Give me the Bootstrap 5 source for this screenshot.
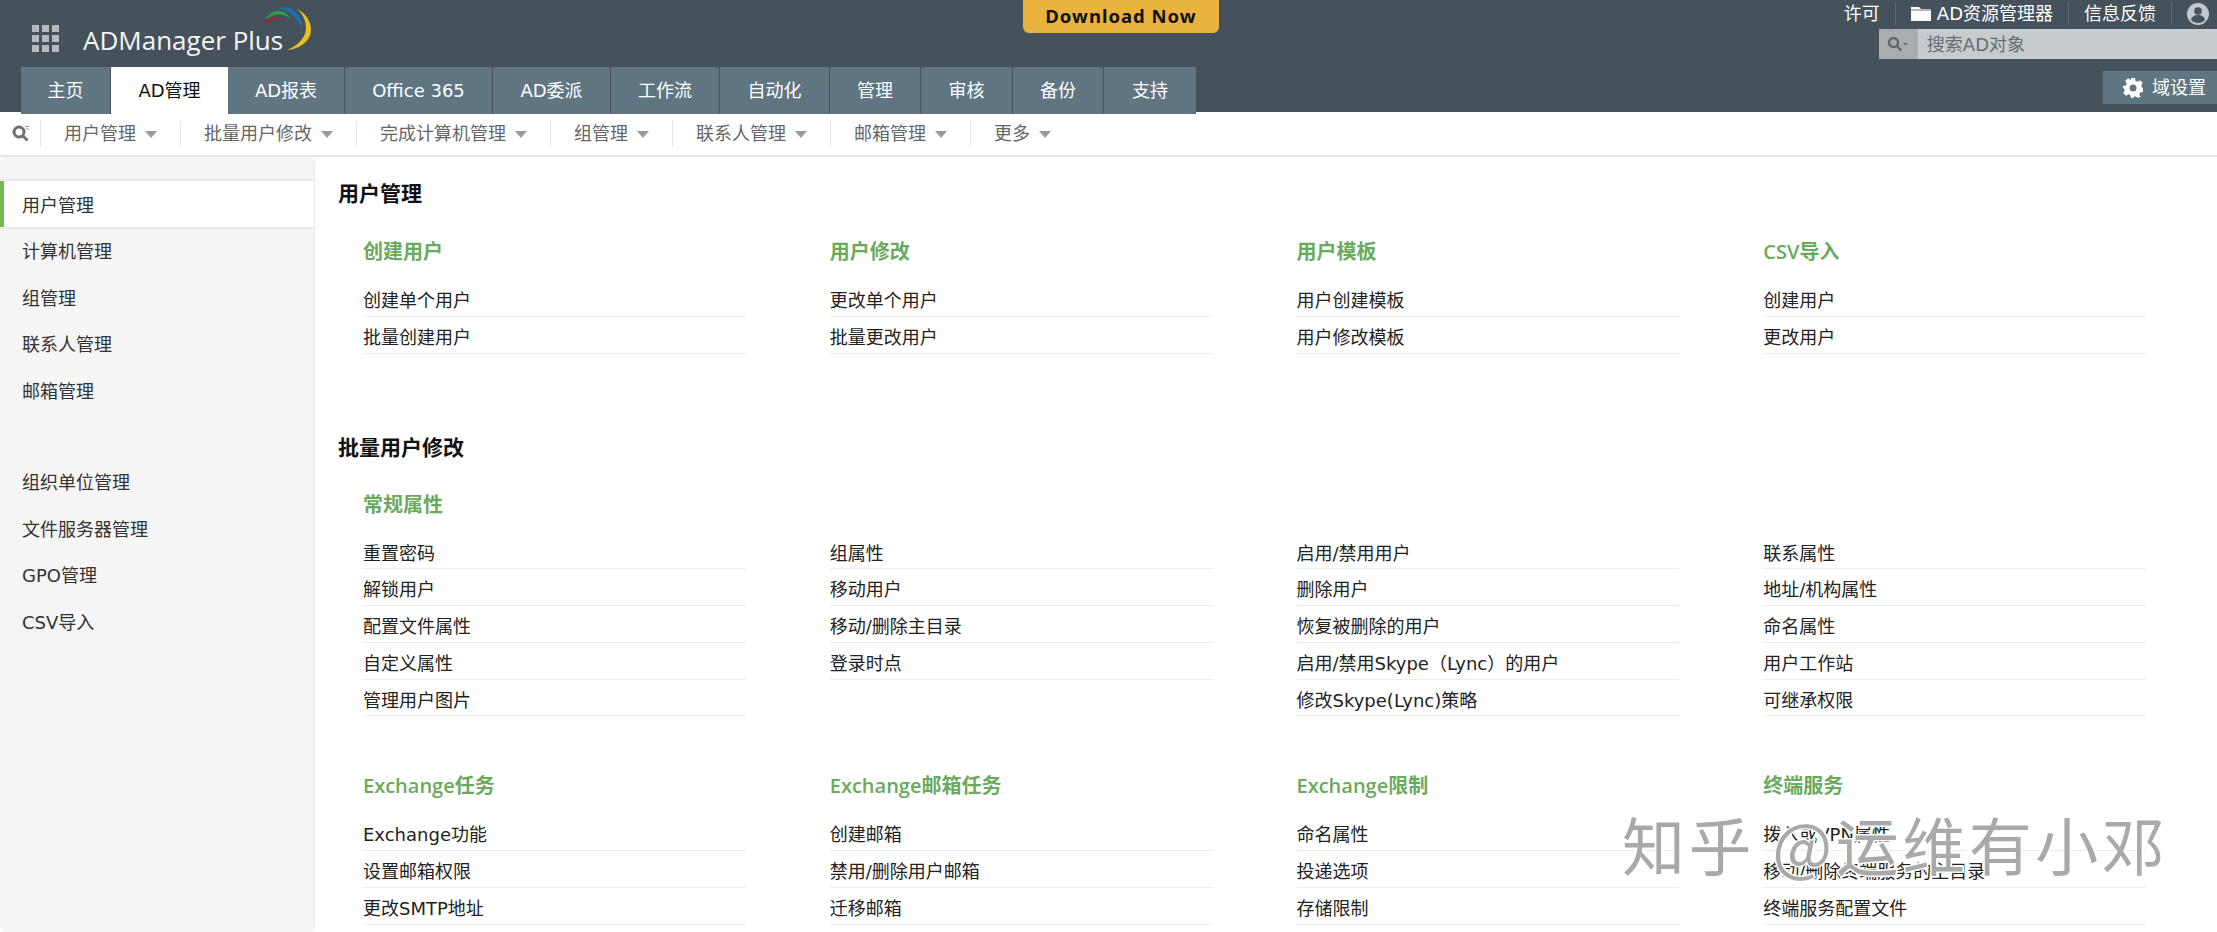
<!DOCTYPE html>
<html lang="zh">
<head>
<meta charset="utf-8">
<title>ADManager Plus</title>
<link href="https://cdn.jsdelivr.net/npm/bootstrap@5.3.0/dist/css/bootstrap.min.css" rel="stylesheet">
<style>
html,body{height:932px;overflow:hidden;background:#fff}
body{font-family:"DejaVu Sans","Noto Sans CJK SC",sans-serif;font-size:18px;color:#222}
a{text-decoration:none;color:inherit}
.app-hdr{height:112px;background:#45515b;color:#fff}
.hdr-left{width:1830px}
.logo-row{height:67px}
.grid-ic{margin-left:32px;width:27px;height:27px;margin-top:25px;display:grid;grid-template-columns:repeat(3,7px);grid-auto-rows:7px;gap:3px}
.grid-ic i{background:#b6babd;display:block}
.logo-box{margin-left:24px;margin-top:8px;width:228px;height:46px;position:relative}
.logo-txt{font-family:"Open Sans",sans-serif;font-size:26px;line-height:34px;padding-top:15px;color:#f4f6f7;white-space:nowrap;display:block}
.logo-arc{position:absolute;right:0;top:0;overflow:visible}
.dl-btn{margin-left:712px;width:196px;height:33px;background:#e9b33d;color:#111;font-weight:700;font-size:18.500px;line-height:32px;padding:0;border:0;border-radius:0 0 6px 6px;letter-spacing:1px;font-family:"Noto Sans","Open Sans",sans-serif}
.dl-btn:hover{background:#e9b33d;color:#111}
.main-tabs{margin-left:21px;height:47px;position:relative;z-index:2;flex-wrap:nowrap}
.main-tabs a{display:flex;align-items:center;justify-content:center;height:47px;background:#5f7582;color:#fff;border-right:1px solid #45515b;white-space:nowrap}
.main-tabs a.on{background:#fff;color:#111;border-right:0}
.main-tabs a.last{border-right:0}
.hdr-right{flex:1}
.top-links{height:29px;font-size:18px;white-space:nowrap}
.top-links a{padding:0 15px;height:23px;line-height:23px;border-right:1px solid #5d6b75;display:flex;align-items:center;gap:6px;margin-top:2px}
.top-links a:last-child{border:0;padding:0 0 0 15px;width:45px}
.srch{height:30px;background:#c7cbce;margin-left:50px}
.srch-add{width:39px;background:#a7adb1;display:flex;align-items:center;justify-content:center}
.srch-txt{padding-left:9px;font-size:18px;color:#666d72;line-height:31px}
.dom-btn{margin-top:12px;margin-left:auto;width:114px;height:33px;background:#5f7582;color:#fff;display:flex;align-items:center;gap:9px;padding-left:20px;font-size:18px}
.sub-nav{height:45px;background:#fff;border-bottom:2px solid #e6e6e6;color:#666;padding-bottom:1px}
.sub-srch{width:41px;height:25px;border-right:1px solid #e3e3e3;display:flex;align-items:center;padding-left:12px}
.sub-nav a{height:25px;display:flex;align-items:center;padding:0 23px 0 23px;border-right:1px solid #e3e3e3;white-space:nowrap}
.sub-nav a:last-child{border:0}
.sub-nav a b{display:block;margin-left:9px;margin-top:3px;width:0;height:0;border-left:6px solid transparent;border-right:6px solid transparent;border-top:7px solid #999}
.body-wrap{height:775px;overflow:hidden}
.side{width:315px;flex:none;background:#f5f5f5;border-right:1px solid #ededed;padding-top:24px}
.side .list-group-item{background:transparent;border:0;padding:0 0 0 22px;height:46.670px;line-height:49px;font-size:18px;color:#333;border-radius:0}
.side .list-group-item.on{background:#fff;border-left:4px solid #76b852;padding-left:18px;box-shadow:0 -2px 0 #ebebeb,0 2px 0 #ebebeb;height:46px}
.side .spacer{height:44.500px}
.cont{padding-top:21px;padding-left:23px;flex:1;min-width:0}
.grp-h{font-size:21px;font-weight:700;line-height:30px;color:#111;margin:0;font-family:"Open Sans","Noto Sans CJK SC",sans-serif}
.grp-b{width:1867px;margin:0 0 0 25px}
.cell{padding:0 84px 0 0}
.sec-t{font-family:"Open Sans","Noto Sans CJK SC",sans-serif;font-size:20px;font-weight:600;line-height:30px;color:#6aaa5c;margin:0;height:30px}
.rows{margin:13px 0 0;padding:0}
.rows li{height:36.750px;border-bottom:1px solid #ececec;line-height:41px;font-size:18px;color:#222;white-space:nowrap;list-style:none}
.mt-sec{margin-top:29px}
.mt-sec2{margin-top:28px}
.mt-g2{margin-top:78px}
.mt-g3{margin-top:55px}
.wm{position:absolute;left:1622px;top:800px;font-family:"Noto Sans CJK SC",sans-serif;font-size:63px;line-height:86px;color:#a9a9a9;white-space:nowrap;font-weight:400;letter-spacing:3.500px;-webkit-text-stroke:3px #fff;paint-order:stroke fill;z-index:5;pointer-events:none}
</style>
</head>
<body>
<header class="app-hdr d-flex">
  <div class="hdr-left">
    <div class="logo-row d-flex align-items-start">
      <div class="grid-ic"><i></i><i></i><i></i><i></i><i></i><i></i><i></i><i></i><i></i></div>
      <div class="logo-box">
        <span class="logo-txt">ADManager Plus</span>
        <svg class="logo-arc" width="46" height="46" viewBox="0 0 46 46">
          <path d="M-1 16C3 9 11 6 18 13C12 10 5 11 0 17Z" fill="#a3203a"/>
          <path d="M1 10C6 2 18-1 26 11C19 5 9 5 2 11Z" fill="#2f9a4a"/>
          <path d="M14 0C24-3 38 4 37 22C34 12 26 3 14 0Z" fill="#1f6fb0"/>
          <path d="M32 1C42 6 46 14 46 22C46 32 36 41 22 42C32 38 41 30 41 20C41 12 37 5 32 1Z" fill="#e8bf1f"/>
        </svg>
      </div>
      <a class="btn dl-btn" href="#">Download Now</a>
    </div>
    <nav class="nav main-tabs">
      <a href="#" style="width:90px">主页</a>
      <a href="#" class="on" style="width:117px">AD管理</a>
      <a href="#" style="width:117px">AD报表</a>
      <a href="#" style="width:148px">Office 365</a>
      <a href="#" style="width:118px">AD委派</a>
      <a href="#" style="width:109px">工作流</a>
      <a href="#" style="width:110px">自动化</a>
      <a href="#" style="width:91px">管理</a>
      <a href="#" style="width:92px">审核</a>
      <a href="#" style="width:91px">备份</a>
      <a href="#" class="last" style="width:92px">支持</a>
    </nav>
  </div>
  <div class="hdr-right d-flex flex-column">
    <div class="top-links d-flex justify-content-end">
      <a href="#">许可</a>
      <a href="#"><svg width="20" height="16" viewBox="0 0 20 16"><path d="M0 1h8l2 2h10v12H0z" fill="#fff"/><path d="M0 4h20" stroke="#45515b" stroke-width=".8"/></svg>AD资源管理器</a>
      <a href="#">信息反馈</a>
      <a href="#"><svg width="22" height="22" viewBox="0 0 22 22"><circle cx="11" cy="11" r="11" fill="#c2c7cb"/><circle cx="11" cy="8" r="3.800" fill="#45515b"/><path d="M4 17c1-4 4-5 7-5s6 1 7 5c-2 2-4 3-7 3s-5-1-7-3z" fill="#45515b"/></svg></a>
    </div>
    <div class="srch d-flex">
      <div class="srch-add"><svg width="22" height="16" viewBox="0 0 22 16"><circle cx="6.500" cy="6.500" r="4.500" fill="none" stroke="#5f676c" stroke-width="2.400"/><path d="M10 10l4 4.500" stroke="#5f676c" stroke-width="2.600"/><path d="M16 7h5l-2.500 2.500z" fill="#5f676c"/></svg></div>
      <div class="srch-txt">搜索AD对象</div>
    </div>
    <a class="dom-btn" href="#"><svg width="20" height="20" viewBox="0 0 20 20"><path fill="#fff" fill-rule="evenodd" d="M8 0h4l.6 3 1.800.8L17 2.200 19.800 5l-1.600 2.600.8 1.800 1 .6v4l-3 .6-.8 1.800 1.600 2.600L15 19.800l-2.600-1.600-1.800.8L10 20H8l-.6-3-1.800-.8L3 17.800.2 15l1.600-2.600L1 10.600 0 10V8l3-.6.800-1.800L2.200 3 5 .2l2.600 1.600L8 1.600zM10 6.500a3.500 3.500 0 1 0 0 7 3.500 3.500 0 0 0 0-7z"/></svg>域设置</a>
  </div>
</header>
<div class="sub-nav d-flex align-items-center">
  <div class="sub-srch"><svg width="18" height="17" viewBox="0 0 18 17"><circle cx="7" cy="7" r="5" fill="none" stroke="#6a6f73" stroke-width="3"/><path d="M10.500 10.500l5 5" stroke="#6a6f73" stroke-width="3"/><path d="M13 1.500h4M14 4h3" stroke="#9a9ea1" stroke-width="1.200"/></svg></div>
  <a href="#">用户管理<b></b></a>
  <a href="#">批量用户修改<b></b></a>
  <a href="#">完成计算机管理<b></b></a>
  <a href="#">组管理<b></b></a>
  <a href="#">联系人管理<b></b></a>
  <a href="#">邮箱管理<b></b></a>
  <a href="#">更多<b></b></a>
</div>
<div class="body-wrap d-flex">
  <aside class="side list-group">
    <a href="#" class="list-group-item on">用户管理</a>
    <a href="#" class="list-group-item">计算机管理</a>
    <a href="#" class="list-group-item">组管理</a>
    <a href="#" class="list-group-item">联系人管理</a>
    <a href="#" class="list-group-item">邮箱管理</a>
    <div class="spacer"></div>
    <a href="#" class="list-group-item">组织单位管理</a>
    <a href="#" class="list-group-item">文件服务器管理</a>
    <a href="#" class="list-group-item">GPO管理</a>
    <a href="#" class="list-group-item">CSV导入</a>
  </aside>
  <main class="cont">
    <h2 class="grp-h">用户管理</h2>
    <div class="row g-0 grp-b mt-sec">
      <div class="col-3 cell"><h3 class="sec-t">创建用户</h3><ul class="rows"><li>创建单个用户</li><li>批量创建用户</li></ul></div>
      <div class="col-3 cell"><h3 class="sec-t">用户修改</h3><ul class="rows"><li>更改单个用户</li><li>批量更改用户</li></ul></div>
      <div class="col-3 cell"><h3 class="sec-t">用户模板</h3><ul class="rows"><li>用户创建模板</li><li>用户修改模板</li></ul></div>
      <div class="col-3 cell"><h3 class="sec-t">CSV导入</h3><ul class="rows"><li>创建用户</li><li>更改用户</li></ul></div>
    </div>
    <h2 class="grp-h mt-g2">批量用户修改</h2>
    <div class="row g-0 grp-b mt-sec2">
      <div class="col-3 cell"><h3 class="sec-t">常规属性</h3><ul class="rows"><li>重置密码</li><li>解锁用户</li><li>配置文件属性</li><li>自定义属性</li><li>管理用户图片</li></ul></div>
      <div class="col-3 cell"><div class="sec-t"></div><ul class="rows"><li>组属性</li><li>移动用户</li><li>移动/删除主目录</li><li>登录时点</li></ul></div>
      <div class="col-3 cell"><div class="sec-t"></div><ul class="rows"><li>启用/禁用用户</li><li>删除用户</li><li>恢复被删除的用户</li><li>启用/禁用Skype（Lync）的用户</li><li>修改Skype(Lync)策略</li></ul></div>
      <div class="col-3 cell"><div class="sec-t"></div><ul class="rows"><li>联系属性</li><li>地址/机构属性</li><li>命名属性</li><li>用户工作站</li><li>可继承权限</li></ul></div>
    </div>
    <div class="row g-0 grp-b mt-g3">
      <div class="col-3 cell"><h3 class="sec-t">Exchange任务</h3><ul class="rows"><li>Exchange功能</li><li>设置邮箱权限</li><li>更改SMTP地址</li></ul></div>
      <div class="col-3 cell"><h3 class="sec-t">Exchange邮箱任务</h3><ul class="rows"><li>创建邮箱</li><li>禁用/删除用户邮箱</li><li>迁移邮箱</li></ul></div>
      <div class="col-3 cell"><h3 class="sec-t">Exchange限制</h3><ul class="rows"><li>命名属性</li><li>投递选项</li><li>存储限制</li></ul></div>
      <div class="col-3 cell"><h3 class="sec-t">终端服务</h3><ul class="rows"><li>拨入或VPN属性</li><li>移动/删除终端服务的主目录</li><li>终端服务配置文件</li></ul></div>
    </div>
  </main>
</div>
<div class="wm">知乎 @运维有小邓</div>
</body>
</html>
